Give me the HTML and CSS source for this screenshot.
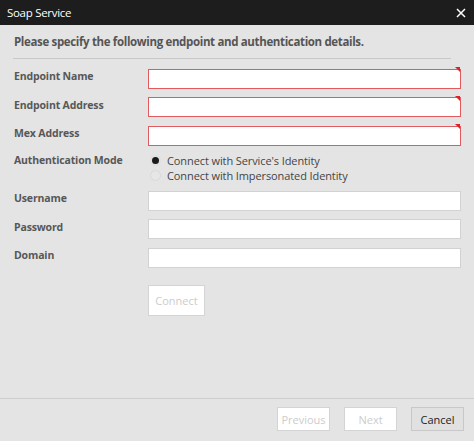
FILE: index.html
```html
<!DOCTYPE html>
<html lang="en">
<head>
    <meta charset="UTF-8">
    <meta name="viewport" content="width=device-width, initial-scale=1.0">
    <title>Soap Service</title>
    <link rel="stylesheet" href="styles.css">
</head>
<body>
    <div class="window">
        <header class="titlebar">
            <span class="title">Soap Service</span>
            <button class="close" aria-label="Close">
                <svg width="10" height="10" viewBox="0 0 10 10">
                    <path d="M1 1 L9 9 M9 1 L1 9" stroke="#fff" stroke-width="1.5" fill="none"/>
                </svg>
            </button>
        </header>

        <main class="content">
            <h1 class="heading">Please specify the following endpoint and authentication details.</h1>

            <form class="form">
                <label class="label" for="endpointName">Endpoint Name</label>
                <div class="field required"><input type="text" id="endpointName"></div>

                <label class="label" for="endpointAddress">Endpoint Address</label>
                <div class="field required"><input type="text" id="endpointAddress"></div>

                <label class="label" for="mexAddress">Mex Address</label>
                <div class="field required"><input type="text" id="mexAddress"></div>

                <span class="label label-auth">Authentication Mode</span>
                <div class="radios">
                    <label class="radio">
                        <span class="dot checked"></span>
                        Connect with Service's Identity
                    </label>
                    <label class="radio">
                        <span class="dot disabled"></span>
                        Connect with Impersonated Identity
                    </label>
                </div>

                <label class="label" for="username">Username</label>
                <div class="field"><input type="text" id="username"></div>

                <label class="label" for="password">Password</label>
                <div class="field"><input type="password" id="password"></div>

                <label class="label" for="domain">Domain</label>
                <div class="field"><input type="text" id="domain"></div>

                <span></span>
                <div class="connect-row">
                    <button type="button" class="btn btn-connect" disabled>Connect</button>
                </div>
            </form>
        </main>

        <footer class="footer">
            <button type="button" class="btn" disabled>Previous</button>
            <button type="button" class="btn" disabled>Next</button>
            <button type="button" class="btn btn-cancel">Cancel</button>
        </footer>
    </div>
</body>
</html>
```

FILE: styles.css
```css
html, body {
    margin: 0;
    padding: 0;
    height: 100%;
}

body {
    font-family: "Open Sans", "Noto Sans", sans-serif;
    background-color: #e4e4e4;
    color: #555;
}

.window {
    display: flex;
    flex-direction: column;
    height: 441px;
}

.titlebar {
    display: flex;
    align-items: center;
    justify-content: space-between;
    height: 25px;
    padding: 0 8px 0 7px;
    background-color: #1d1d1d;
    color: #fff;
    flex-shrink: 0;
}

.title {
    font-size: 11.5px;
    letter-spacing: -0.3px;
}

.close {
    background: none;
    border: none;
    padding: 0;
    display: flex;
}

.content {
    flex: 1;
    padding: 8px 13px 0 13px;
}

.heading {
    margin: 0 10px 0 0;
    padding: 0 1px 8px;
    font-size: 11.5px;
    line-height: 17px;
    font-weight: 700;
    letter-spacing: -0.35px;
    color: #555;
    border-bottom: 1px solid #c9c9c9;
}

.form {
    display: grid;
    grid-template-columns: 134px 1fr;
    row-gap: 8.5px;
    margin-top: 7px;
    padding-left: 1px;
}

.label {
    font-size: 10.5px;
    font-weight: 700;
    letter-spacing: -0.15px;
    color: #575757;
    align-self: center;
}

.label-auth {
    align-self: start;
    margin-top: 1px;
}

.field {
    position: relative;
    height: 20px;
}

.field input {
    width: 100%;
    height: 100%;
    box-sizing: border-box;
    border: 1px solid #d2d2d2;
    background: #fff;
    padding: 0 4px;
    margin: 0;
    outline: none;
}

.field.required input {
    border-color: #e05a5e;
}

/* small validation flag in the corner */
.field.required::after {
    content: "";
    position: absolute;
    top: 1px;
    right: 1px;
    border-top: 5px solid #e0202a;
    border-left: 5px solid transparent;
}

.radios {
    display: flex;
    flex-direction: column;
    margin-top: 1px;
    margin-bottom: -3px;
}

.radio {
    display: flex;
    align-items: center;
    gap: 6px;
    height: 15px;
    line-height: 15px;
    font-size: 11px;
    color: #444;
    letter-spacing: -0.1px;
}

.dot {
    width: 11px;
    height: 11px;
    border-radius: 50%;
    box-sizing: border-box;
    margin-left: 2px;
    flex-shrink: 0;
}

.dot.checked {
    border: 2.5px solid #e0e0e0;
    background: #1a1a1a;
}

.dot.disabled {
    border: 1px solid #d9d9d9;
    background: #e6e6e6;
}

.connect-row {
    padding-top: 11.5px;
}

.btn {
    font-family: inherit;
    font-size: 11px;
    width: 53px;
    height: 24px;
    padding: 0;
    border: 1px solid #d4d4d4;
    background: #fff;
    color: #ccc;
}

.btn-connect {
    width: 57px;
    height: 31px;
}

.footer {
    display: flex;
    justify-content: flex-end;
    gap: 14px;
    height: 43px;
    box-sizing: border-box;
    padding: 8px 10px 0 0;
    border-top: 1px solid #cdcdcd;
    flex-shrink: 0;
}

.btn-cancel {
    background: #e1e1e1;
    border-color: #c8c8c8;
    color: #222;
}
```
